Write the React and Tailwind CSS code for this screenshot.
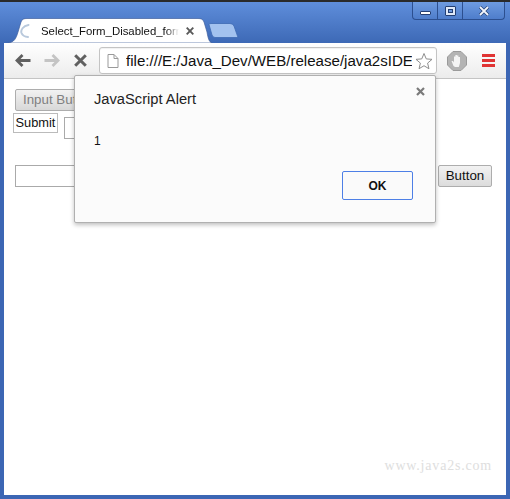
import React from "react";

const sans = "font-['Liberation_Sans',Arial,sans-serif]";

function Tab() {
  return (
    <div className="relative h-[25px] w-[204px] ml-[6px]">
      <svg className="absolute inset-0" width="204" height="25" viewBox="0 0 204 25">
        <path d="M0.5 25 C6 24 8 21 10 14 L13 4 C14 1 16 0.5 19 0.5 L190 0.5 C193 0.5 195 1 196 4 L199 14 C200 20 201 24 204 25 Z" fill="#ffffff" stroke="#3f5f9c" strokeWidth="0.7" />
      </svg>
      <div className="relative flex items-center h-full pl-[12px] pt-[1px]">
        <svg width="10" height="14" viewBox="0 0 10 14" fill="none">
          <path d="M8.5 1 C3 2 0.5 6 1.5 9 C2.5 11.5 5 12.8 8 13" stroke="#b9c9dc" strokeWidth="2" strokeLinecap="round" />
        </svg>
        <span className={`ml-[11px] w-[138px] overflow-hidden whitespace-nowrap text-[11.4px] leading-[16px] text-[#111] ${sans}`} style={{ maskImage: "linear-gradient(to right, #000 125px, transparent 138px)" }}>
          Select_Form_Disabled_form
        </span>
        <svg className="ml-[7px]" width="8" height="8" viewBox="0 0 8 8">
          <path d="M0.7 0.7 L7.3 7.3 M7.3 0.7 L0.7 7.3" stroke="#5a5a5a" strokeWidth="1.9" />
        </svg>
      </div>
    </div>
  );
}

function NewTab() {
  return (
    <svg className="ml-[-4px] mb-[5px]" width="31" height="15" viewBox="0 0 31 15">
      <path d="M1 1.5 Q1 0.5 3 0.5 L22 0.5 Q25 0.5 26 3 L30 14.5 L7 14.5 Q5 14.5 4 12 Z" fill="#a3c2ef" stroke="#3d69b3" strokeWidth="0.8" />
    </svg>
  );
}

function WindowControls() {
  return (
    <div className="absolute right-[5px] top-[2px] flex h-[18px] w-[93px] rounded-b-[4px] border border-t-0 border-[#2c4f8f] bg-gradient-to-b from-[#6e9be0] to-[#4e7dcb]">
      <div className="flex w-[25px] items-center justify-center border-r border-[#2c4f8f]">
        <div className="mt-[5px] h-[4px] w-[11px] rounded-[1px] border border-[#243f73] bg-white" />
      </div>
      <div className="flex w-[25px] items-center justify-center border-r border-[#2c4f8f]">
        <div className="flex h-[10px] w-[11px] items-center justify-center rounded-[1px] border border-[#243f73] bg-[#dfe9f8]">
          <div className="h-[4px] w-[5px] border border-[#243f73] bg-[#6e9be0]" />
        </div>
      </div>
      <div className="flex flex-1 items-center justify-center">
        <svg width="12" height="10" viewBox="0 0 12 10">
          <path d="M2 1 L10 9 M10 1 L2 9" stroke="#243f73" strokeWidth="3.2" />
          <path d="M2 1 L10 9 M10 1 L2 9" stroke="#f2f6fc" strokeWidth="1.8" />
        </svg>
      </div>
    </div>
  );
}

function Toolbar() {
  return (
    <div className="flex h-[35px] items-center bg-gradient-to-b from-white to-[#ececec] pl-[11px]">
      <svg width="16" height="13" viewBox="0 0 16 13" fill="none">
        <path d="M15.5 6.5 H3 M7.5 1 L2 6.5 L7.5 12" stroke="#606060" strokeWidth="2.8" />
      </svg>
      <svg className="ml-[13px]" width="16" height="13" viewBox="0 0 16 13" fill="none">
        <path d="M0.5 6.5 H13 M8.5 1 L14 6.5 L8.5 12" stroke="#c4c4c4" strokeWidth="2.8" />
      </svg>
      <svg className="ml-[14px]" width="13" height="13" viewBox="0 0 13 13" fill="none">
        <path d="M1.2 1.2 L11.8 11.8 M11.8 1.2 L1.2 11.8" stroke="#606060" strokeWidth="3" />
      </svg>
      <div className="ml-[12px] flex h-[27px] w-[338px] items-center rounded-[3px] border border-[#c4c4c4] bg-white pl-[7px] shadow-[inset_0_1px_1px_rgba(0,0,0,0.06)]">
        <svg width="12" height="14" viewBox="0 0 12 14" fill="none">
          <path d="M1 0.5 H7 L11 4.5 V13.5 H1 Z M7 0.5 V4.5 H11" stroke="#9a9a9a" fill="#fff" />
        </svg>
        <span className={`ml-[7px] w-[286px] overflow-hidden whitespace-nowrap text-[15.1px] leading-[20px] text-[#111] ${sans}`}>
          file:///E:/Java_Dev/WEB/release/java2sIDE
        </span>
        <svg className="ml-[3px]" width="18" height="18" viewBox="0 0 24 23" fill="none">
          <path d="M12 1.5 L15 8.7 L22.7 9.3 L16.8 14.3 L18.6 21.8 L12 17.8 L5.4 21.8 L7.2 14.3 L1.3 9.3 L9 8.7 Z" stroke="#8a8a8a" strokeWidth="1.3" fill="#fff" />
        </svg>
      </div>
      <svg className="ml-[10px]" width="20" height="20" viewBox="0 0 20 20">
        <path d="M6 0.5 H14 L19.5 6 V14 L14 19.5 H6 L0.5 14 V6 Z" fill="#b4b4b4" stroke="#9a9a9a" />
        <path d="M6.5 15 L4.5 10 H6 L7 11.5 V5.5 H8.4 V9.5 V4 H9.9 V9.5 V4.5 H11.4 V9.5 V6 H13 V12 L11.8 16 H8 Z" fill="#f4f4f4" />
      </svg>
      <div className="ml-[15px] flex w-[13px] flex-col gap-[2px]">
        <div className="h-[3px] bg-[#e03434]" />
        <div className="h-[3px] bg-[#e03434]" />
        <div className="h-[3px] bg-[#e03434]" />
      </div>
    </div>
  );
}

function Page() {
  return (
    <div className={`relative h-[416px] bg-white text-[13.33px] text-[#111] ${sans}`}>
      <div className="pl-[11px] pt-[10px]">
        <button className="block h-[22px] w-[90px] rounded-[2px] border border-[#adadad] bg-gradient-to-b from-[#f2f2f2] to-[#d8d8d8] text-[#808080] text-left pl-[7px]">
          Input Button
        </button>
      </div>
      <div className="mt-[2px] flex items-start pl-[9px]">
        <div className="flex h-[20px] w-[45px] items-center justify-center border border-[#bbb] bg-white text-[12.8px] text-[#111]">Submit</div>
        <div className="ml-[6px] mt-[4px] h-[22px] w-[60px] border border-[#aaa] bg-white" />
      </div>
      <div className="mt-[26px] flex items-start pl-[11px]">
        <div className="h-[22px] w-[120px] border border-[#aaa] bg-white" />
        <button className="ml-[303px] h-[22px] w-[54px] rounded-[2px] border border-[#adadad] bg-gradient-to-b from-[#f2f2f2] to-[#dcdcdc] text-[#111]">
          Button
        </button>
      </div>
      <div className="absolute bottom-[21px] right-[14px] font-['Liberation_Serif',serif] text-[14px] leading-[16px] tracking-[0.8px] text-[#dedede]">
        www.java2s.com
      </div>
    </div>
  );
}

function Dialog() {
  return (
    <div className={`absolute left-[74px] top-[75px] h-[148px] w-[362px] rounded-[2px] border border-[#b0b0b0] bg-[#fbfbfb] shadow-[0_2px_4px_rgba(0,0,0,0.25)] ${sans}`}>
      <div className="absolute left-[19px] top-[15px] text-[14.7px] leading-[17px] text-[#222]">JavaScript Alert</div>
      <svg className="absolute right-[10px] top-[11px]" width="9" height="9" viewBox="0 0 9 9">
        <path d="M1 1 L8 8 M8 1 L1 8" stroke="#7a7a7a" strokeWidth="2.2" />
      </svg>
      <div className="absolute left-[19px] top-[58px] text-[12px] leading-[15px] text-[#111]">1</div>
      <button className="absolute left-[267px] top-[95px] h-[29px] w-[71px] rounded-[2px] border border-[#4d7fe6] bg-[#fafafa] text-[12px] font-bold text-[#111]">
        OK
      </button>
    </div>
  );
}

export default function App() {
  return (
    <div className="relative h-[499px] w-[510px] overflow-hidden bg-[#3c66b4]">
      <div className="h-[2px] bg-[#2a2a2a]" />
      <div className="h-[41px] bg-gradient-to-b from-[#5f8edb] to-[#3d69b6] pt-[16px]">
        <div className="flex items-end pl-[2px]">
          <Tab />
          <NewTab />
        </div>
      </div>
      <WindowControls />
      <div className="mx-[4px] border-b border-[#c4c4c4]">
        <Toolbar />
      </div>
      <div className="mx-[4px]">
        <Page />
      </div>
      <Dialog />
    </div>
  );
}
